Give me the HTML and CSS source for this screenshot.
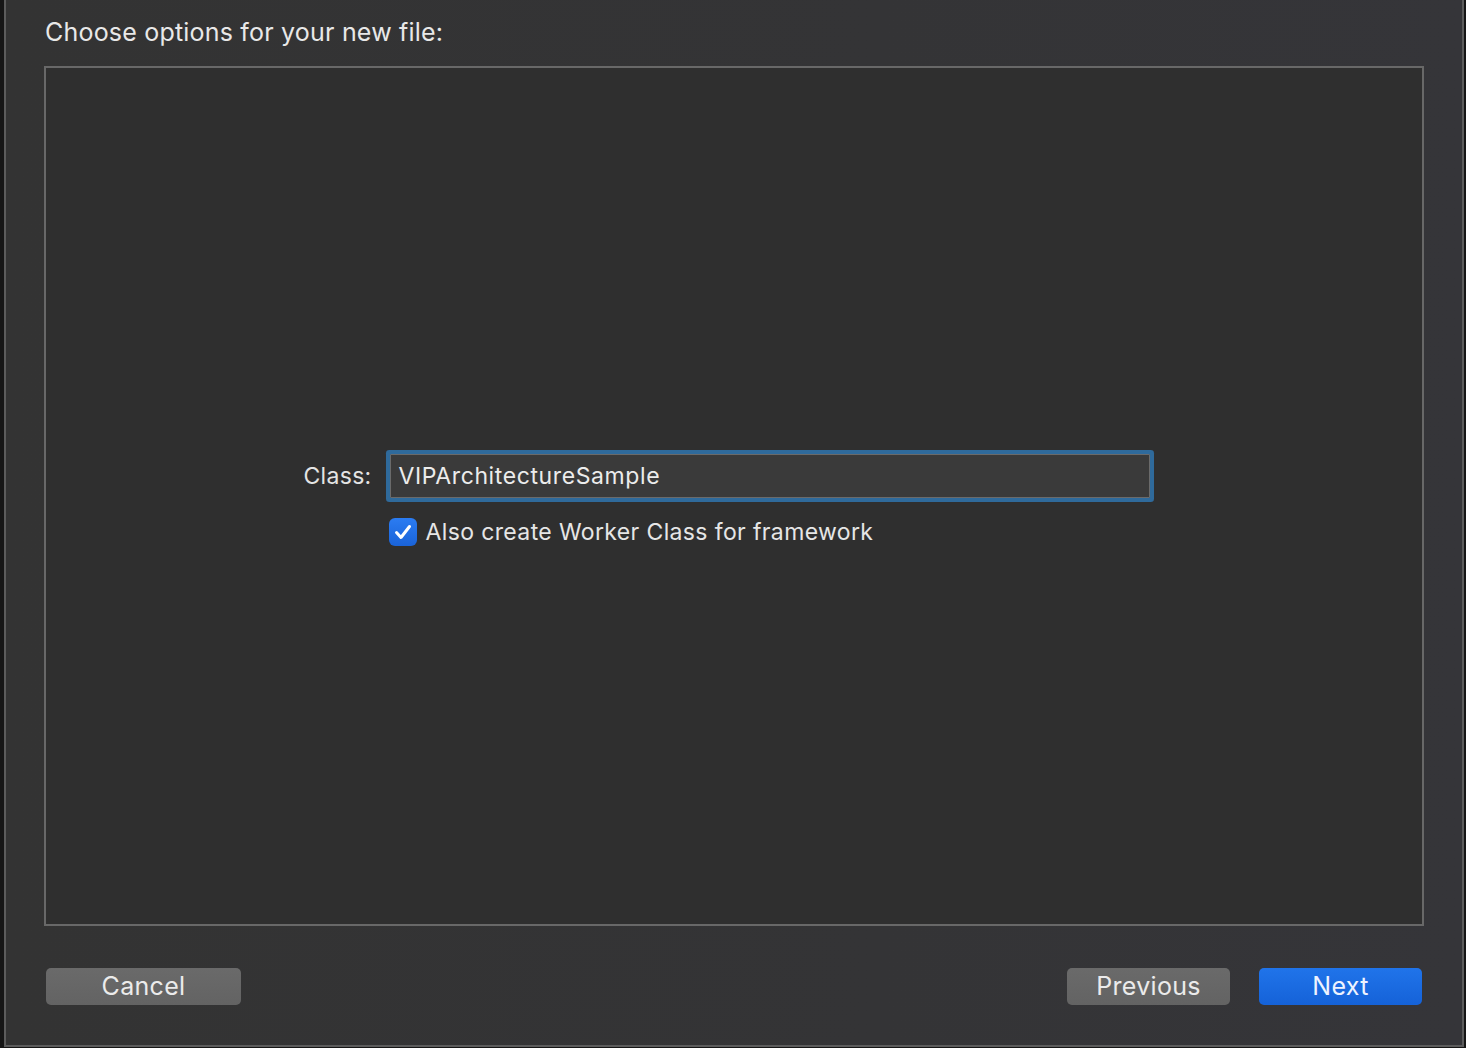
FILE: index.html
```html
<!DOCTYPE html>
<html lang="en">
<head>
<meta charset="utf-8">
<title>Choose options for your new file</title>
<link rel="stylesheet" href="styles.css">
</head>
<body>
<div class="window">
  <h1 class="title">Choose options for your new file:</h1>
  <div class="options-box">
    <div class="form">
      <label class="field-label" for="cls">Class:</label>
      <div class="field-input">VIPArchitectureSample</div>
      <div></div>
      <div class="check-row">
        <span class="checkbox">
          <svg viewBox="0 0 28 28" width="28" height="28"><path d="M7.5 14.5 L12 19.5 L20.5 8.5" fill="none" stroke="#fff" stroke-width="3" stroke-linecap="round" stroke-linejoin="round"/></svg>
        </span>
        <span class="check-label">Also create Worker Class for framework</span>
      </div>
    </div>
  </div>
  <div class="buttons">
    <button class="btn btn-cancel">Cancel</button>
    <div class="spacer"></div>
    <button class="btn btn-prev">Previous</button>
    <button class="btn btn-next">Next</button>
  </div>
</div>
</body>
</html>
```

FILE: styles.css
```css
html, body {
  margin: 0;
  padding: 0;
  height: 100%;
}
body {
  background: #161616;
  font-family: Inter, "Liberation Sans", sans-serif;
  color: #e6e6e6;
  overflow: hidden;
}
.window {
  box-sizing: border-box;
  margin-left: 4px;
  width: 1460px;
  height: 1047px;
  background: linear-gradient(90deg, #333333 0%, #343436 60%, #353539 100%);
  border-left: 2px solid #5c5c5c;
  border-right: 2px solid #5c5c5c;
  border-bottom: 2px solid #5c5c5c;
  padding: 17px 38px 0 38px;
  display: flex;
  flex-direction: column;
}
.title {
  margin: 0 0 18px 1px;
  font-size: 25px;
  font-weight: 400;
  line-height: 31px;
  color: #e8e8e8;
  letter-spacing: 0.2px;
}
.options-box {
  box-sizing: border-box;
  height: 860px;
  border: 2px solid #686868;
  background: #2f2f2f;
  display: flex;
  align-items: center;
  justify-content: center;
}
.form {
  display: grid;
  grid-template-columns: auto 768px;
  column-gap: 14px;
  row-gap: 16px;
  align-items: center;
  margin-left: -11px;
  margin-top: 4px;
}
.field-label {
  font-size: 23px;
  color: #e4e4e4;
  text-align: right;
  letter-spacing: 0.3px;
}
.field-input {
  box-sizing: border-box;
  height: 44px;
  margin: 4px;
  width: 760px;
  border: 1px solid #6a6a6a;
  background: #3a3a3a;
  border-radius: 1px;
  box-shadow: 0 0 0 4px #2f6a9b;
  font-size: 23px;
  letter-spacing: 0.6px;
  line-height: 42px;
  padding-left: 8px;
  color: #ececec;
}
.check-row {
  display: flex;
  align-items: center;
  gap: 9px;
  margin-left: 3px;
}
.checkbox {
  width: 28px;
  height: 28px;
  border-radius: 6px;
  background: linear-gradient(180deg, #2b7cf2 0%, #1a63d8 100%);
  display: flex;
}
.check-label {
  font-size: 23px;
  letter-spacing: 0.37px;
  color: #e6e6e6;
}
.buttons {
  display: flex;
  align-items: center;
  margin-top: 42px;
  padding-left: 2px;
  padding-right: 2px;
}
.spacer { flex: 1; }
.btn {
  box-sizing: border-box;
  height: 37px;
  border: none;
  border-radius: 5px;
  font-family: Inter, "Liberation Sans", sans-serif;
  font-size: 25px;
  letter-spacing: 0.3px;
  color: #ebebeb;
  padding: 0;
  line-height: 37px;
}
.btn-cancel {
  width: 195px;
  background: linear-gradient(180deg, #6a6a6a 0%, #636363 100%);
}
.btn-prev {
  width: 163px;
  background: linear-gradient(180deg, #6a6a6a 0%, #636363 100%);
  margin-right: 29px;
}
.btn-next {
  width: 163px;
  background: linear-gradient(180deg, #2074ea 0%, #1562d8 100%);
  color: #eef3ff;
  margin-right: 0;
}
```
